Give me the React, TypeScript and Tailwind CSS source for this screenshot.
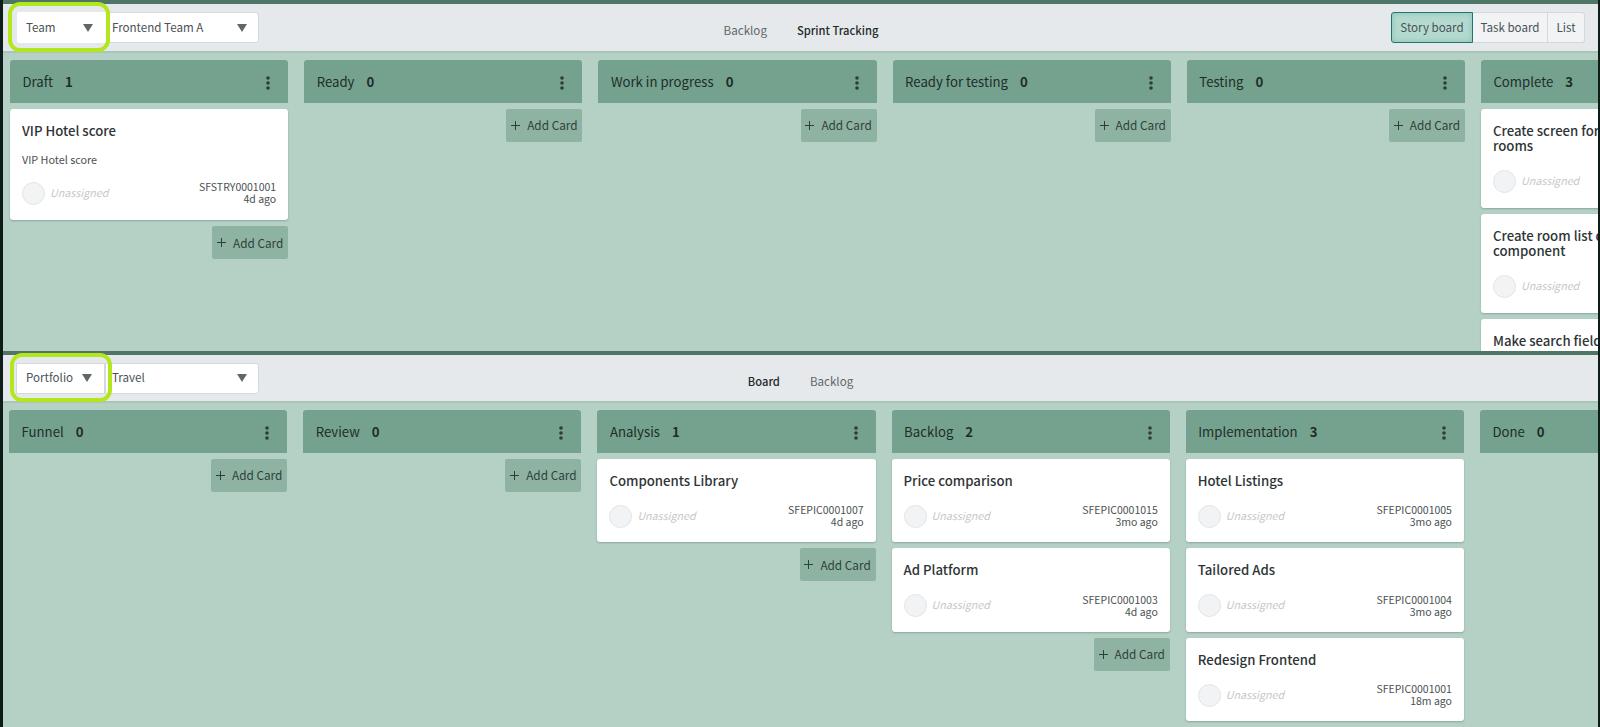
const font = { fontFamily: '"Noto Sans CJK SC", "Noto Sans", sans-serif' };

type CardData = {
  title: string;
  desc?: string;
  id?: string;
  age?: string;
};

type ColumnData = {
  name: string;
  count: number;
  cards: CardData[];
};

const teamColumns: ColumnData[] = [
  {
    name: "Draft",
    count: 1,
    cards: [{ title: "VIP Hotel score", desc: "VIP Hotel score", id: "SFSTRY0001001", age: "4d ago" }],
  },
  { name: "Ready", count: 0, cards: [] },
  { name: "Work in progress", count: 0, cards: [] },
  { name: "Ready for testing", count: 0, cards: [] },
  { name: "Testing", count: 0, cards: [] },
  {
    name: "Complete",
    count: 3,
    cards: [
      { title: "Create screen for listing hotel\nrooms", id: "SFSTRY0001002", age: "4d ago" },
      { title: "Create room list card reusable\ncomponent", id: "SFSTRY0001003", age: "4d ago" },
      { title: "Make search field available\non every page", id: "SFSTRY0001004", age: "4d ago" },
    ],
  },
];

const portfolioColumns: ColumnData[] = [
  { name: "Funnel", count: 0, cards: [] },
  { name: "Review", count: 0, cards: [] },
  {
    name: "Analysis",
    count: 1,
    cards: [{ title: "Components Library", id: "SFEPIC0001007", age: "4d ago" }],
  },
  {
    name: "Backlog",
    count: 2,
    cards: [
      { title: "Price comparison", id: "SFEPIC0001015", age: "3mo ago" },
      { title: "Ad Platform", id: "SFEPIC0001003", age: "4d ago" },
    ],
  },
  {
    name: "Implementation",
    count: 3,
    cards: [
      { title: "Hotel Listings", id: "SFEPIC0001005", age: "3mo ago" },
      { title: "Tailored Ads", id: "SFEPIC0001004", age: "3mo ago" },
      { title: "Redesign Frontend", id: "SFEPIC0001001", age: "18m ago" },
    ],
  },
  { name: "Done", count: 0, cards: [] },
];

const Caret = () => (
  <svg width="10" height="8" viewBox="0 0 10 8" className="shrink-0">
    <path d="M0 0 H10 L5 8 Z" fill="#5f6769" />
  </svg>
);

const Select = ({ label, className }: { label: string; className: string }) => (
  <div className={`flex h-[31px] items-center justify-between bg-white text-[11.6px] text-[#4a5254] ${className}`}>
    <span>{label}</span>
    <Caret />
  </div>
);

const Card = ({ card }: { card: CardData }) => (
  <div className={`shrink-0 rounded-[3px] bg-white px-3 pt-[14px] shadow-[0_1px_2px_rgba(60,90,80,0.35)] ${card.desc ? "pb-[15px]" : "pb-[14px]"}`}>
    <div className="text-[13.2px] leading-[15.5px] font-medium whitespace-pre-line text-[#2e3436]">{card.title}</div>
    {card.desc && <div className="mt-[13px] text-[10.8px] leading-[16px] text-[#4a5254]">{card.desc}</div>}
    <div className={`flex items-center justify-between ${card.desc ? "mt-[14px]" : "mt-[16px]"}`}>
      <div className="flex items-center gap-[5px]">
        <div className="h-[23px] w-[23px] rounded-full border border-[#e2e4e6] bg-[#f2f3f4]" />
        <span className="text-[10.7px] text-[#c4c8ca] italic">Unassigned</span>
      </div>
      <div className="text-right text-[10.5px] leading-[12px] text-[#4a5254]">
        <div>{card.id}</div>
        <div>{card.age}</div>
      </div>
    </div>
  </div>
);

const AddCard = () => (
  <div className="flex h-[33px] w-[76px] items-center justify-center gap-[7px] self-end rounded-[2px] bg-[#8eb3a2] text-[11.8px] text-[#2e3f3a]">
    <svg width="9" height="9" viewBox="0 0 9 9">
      <path d="M4.5 0 V9 M0 4.5 H9" stroke="#2e3f3a" strokeWidth="1" />
    </svg>
    <span>Add Card</span>
  </div>
);

const Column = ({ column }: { column: ColumnData }) => (
  <div className="flex w-[278.2px] shrink-0 flex-col gap-[6px]">
    <div className="flex h-[42.5px] shrink-0 items-center justify-between rounded-t-[3px] bg-[#74a28f] pr-[18px] pl-[12.5px]">
      <div className="flex items-center gap-[12px] pt-[2px] text-[13.2px] text-[#1f2d29]">
        <span>{column.name}</span>
        <span className="font-bold">{column.count}</span>
      </div>
      <svg width="4" height="14" viewBox="0 0 4 14" className="mt-[3px]">
        <circle cx="2" cy="2" r="1.8" fill="#2f3c38" />
        <circle cx="2" cy="7" r="1.8" fill="#2f3c38" />
        <circle cx="2" cy="12" r="1.8" fill="#2f3c38" />
      </svg>
    </div>
    {column.cards.map((card) => (
      <Card key={card.title} card={card} />
    ))}
    {column.name !== "Complete" && column.name !== "Done" && <AddCard />}
  </div>
);

const Highlight = ({ className }: { className: string }) => (
  <div className={`absolute w-[102px] rounded-[12px] border-[4px] border-[#b4e61e] ${className}`} />
);

export default function App() {
  return (
    <div className="flex h-[727px] w-full overflow-hidden bg-[#0e1c1a]" style={font}>
      <div className="relative ml-[3px] flex h-full w-[1595px] flex-col overflow-hidden">
        {/* team board */}
        <section className="flex h-[351px] shrink-0 flex-col overflow-hidden border-t-[4px] border-[#4f7566] bg-[#b5d1c5]">
          <div className="grid h-[49px] shrink-0 grid-cols-[1fr_auto_1fr] items-center border-b-2 border-[#a8c5b8] bg-[#e6e9ec] pr-[13px] pl-[14px]">
            <div className="flex">
              <Select label="Team" className="w-[90px] rounded-l-[2px] pr-[14px] pl-[9px]" />
              <Select label="Frontend Team A" className="w-[152px] rounded-r-[3px] border border-[#d5d8da] pr-[11px] pl-[4px]" />
            </div>
            <div className="flex gap-[30px] pt-[6px] text-[11.6px]">
              <span className="text-[#5f6769]">Backlog</span>
              <span className="text-[11.2px] font-medium text-[#23292b]">Sprint Tracking</span>
            </div>
            <div className="flex justify-end text-[11.6px] text-[#4a5254]">
              <div className="flex h-[31px] w-[82px] items-center justify-center rounded-l-[3px] border border-[#23756c] bg-[#b5dad0] shadow-[inset_0_0_6px_rgba(120,190,175,0.8)]">Story board</div>
              <div className="flex h-[31px] w-[75px] items-center justify-center border-y border-r border-[#d5d8da] bg-[#f1f3f4]">Task board</div>
              <div className="flex h-[31px] w-[37px] items-center justify-center rounded-r-[3px] border-y border-r border-[#d5d8da] bg-[#f1f3f4]">List</div>
            </div>
          </div>
          <div className="flex flex-1 items-start gap-4 overflow-hidden pt-[7px] pl-[7px]">
            {teamColumns.map((column) => (
              <Column key={column.name} column={column} />
            ))}
          </div>
        </section>

        {/* portfolio board */}
        <section className="flex min-h-0 flex-1 flex-col overflow-hidden border-t-[4px] border-[#4f7566] bg-[#b5d1c5]">
          <div className="grid h-[48px] shrink-0 grid-cols-[1fr_auto_1fr] items-center border-b-2 border-[#a8c5b8] bg-[#e6e9ec] pr-[13px] pl-[13px]">
            <div className="flex">
              <Select label="Portfolio" className="w-[89px] border border-[#d5d8da] pr-[12px] pl-[9px]" />
              <Select label="Travel" className="w-[154px] rounded-r-[3px] border border-[#d5d8da] pr-[11px] pl-[6px]" />
            </div>
            <div className="flex gap-[30px] pt-[8px] text-[11.6px]">
              <span className="text-[11.2px] font-medium text-[#23292b]">Board</span>
              <span className="text-[#5f6769]">Backlog</span>
            </div>
            <div />
          </div>
          <div className="flex flex-1 items-start gap-4 overflow-hidden pt-[7px] pl-[6px]">
            {portfolioColumns.map((column) => (
              <Column key={column.name} column={column} />
            ))}
          </div>
        </section>

        <Highlight className="top-[2px] left-[5px] h-[50px]" />
        <Highlight className="top-[353px] left-[7px] h-[49px]" />
      </div>
    </div>
  );
}
